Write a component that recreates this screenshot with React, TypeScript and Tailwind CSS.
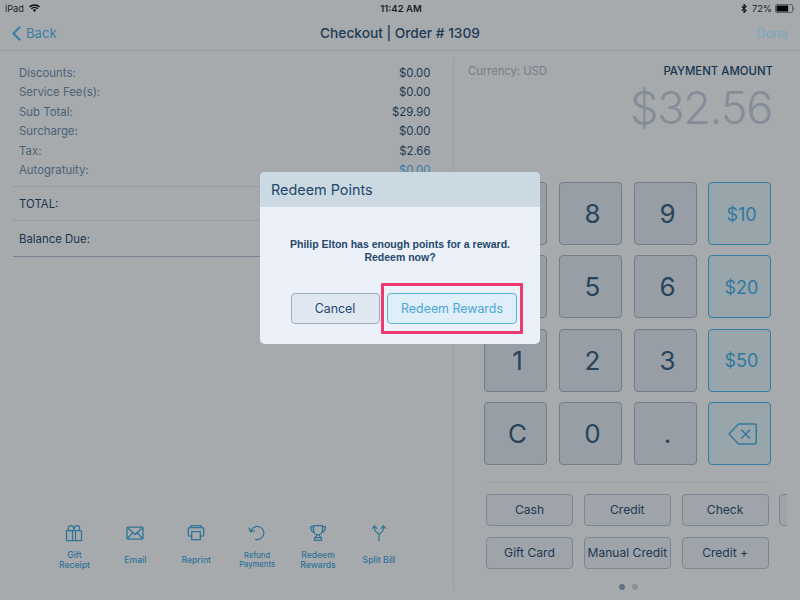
import type { ReactNode } from 'react';

const summaryRows = [
  { label: 'Discounts:', value: '$0.00' },
  { label: 'Service Fee(s):', value: '$0.00' },
  { label: 'Sub Total:', value: '$29.90' },
  { label: 'Surcharge:', value: '$0.00' },
  { label: 'Tax:', value: '$2.66' },
  { label: 'Autogratuity:', value: '$0.00', editable: true },
];

const keypad = [
  '7', '8', '9', '$10',
  '4', '5', '6', '$20',
  '1', '2', '3', '$50',
  'C', '0', '.', 'back',
];

const paymentMethods = ['Cash', 'Credit', 'Check', 'Gift Card', 'Manual Credit', 'Credit +'];

const actions: { lines: string[]; size: string; icon: ReactNode }[] = [
  {
    lines: ['Gift', 'Receipt'],
    size: 'text-[8.6px] leading-[10px]',
    icon: (
      <>
        <path d="M1.5 6.5h15v10h-15zM7.5 6.5v10M10.5 6.5v10" />
        <path d="M9 6.2C8.8 3.200 7.500 1.500 5.700 1.500 3.500 1.500 2.500 4 4 6.300M9 6.200c.2-3 1.500-4.700 3.300-4.700 2.200 0 3.200 2.500 1.700 4.800" />
      </>
    ),
  },
  {
    lines: ['Email'],
    size: 'text-[8.6px] leading-[10px]',
    icon: (
      <>
        <rect x="1" y="3.2" width="16" height="11.8" rx="1" />
        <path d="M1.5 3.8 9 10.5l7.500-6.700M1.500 14.500l5.200-5.700M16.500 14.500l-5.200-5.700" />
      </>
    ),
  },
  {
    lines: ['Reprint'],
    size: 'text-[8.6px] leading-[10px]',
    icon: (
      <>
        <path d="M4.5 12H2.700A1.500 1.500 0 0 1 1.200 10.500V5A1.500 1.500 0 0 1 2.700 3.500h12.600A1.500 1.500 0 0 1 16.800 5v5.500a1.500 1.500 0 0 1-1.500 1.500h-1.800" />
        <path d="M4 3.200V1.700h10v1.500M4.700 7.600h8.600v8.100H4.700z" />
      </>
    ),
  },
  {
    lines: ['Refund', 'Payments'],
    size: 'text-[7.6px] leading-[9px]',
    icon: (
      <>
        <path d="M3 6.800A6.600 6.600 0 1 1 7.500 15.400" />
        <path d="M1.200 4.200l1.200 3.700 3.800-1.200" />
      </>
    ),
  },
  {
    lines: ['Redeem', 'Rewards'],
    size: 'text-[8.6px] leading-[10px]',
    icon: (
      <>
        <path d="M4.500 1.500h9v4.200c0 3-2 5.200-4.500 5.200S4.500 8.700 4.500 5.700z" />
        <path d="M4.500 2.500H1.700c0 3.300 1 5.500 3.800 6M13.500 2.500h2.800c0 3.300-1 5.500-3.800 6M7.800 10.800c0 1.500-.5 1.900-2.300 2.900v2.600h7v-2.600c-1.800-1-2.300-1.400-2.300-2.900M5.500 13.700h7" />
      </>
    ),
  },
  {
    lines: ['Split Bill'],
    size: 'text-[8.6px] leading-[10px]',
    icon: (
      <>
        <path d="M9 16.500V11C9 8.500 4.600 9 4.600 5V2M9 11c0-2.500 4.400-2 4.400-6V2" />
        <path d="M2.300 4.300l2.300-2.500 2.300 2.500M11.100 4.300l2.300-2.500 2.300 2.500" />
      </>
    ),
  },
];

function StatusBar() {
  return (
    <div className="flex h-[17px] items-center justify-between px-[5px] text-[9.5px] text-[#1d2023]">
      <div className="flex w-[120px] items-center gap-[5px]">
        <span className="text-[9.2px]">iPad</span>
        <svg width="11" height="8" viewBox="0 0 11 8" fill="none" stroke="#0b0c0d" strokeWidth="1.5">
          <path d="M.6 2.900a7 7 0 0 1 9.800 0M2.300 4.700a4.600 4.600 0 0 1 6.400 0" />
          <path d="M5.500 7.900 3.700 6a2.600 2.600 0 0 1 3.600 0z" fill="#0b0c0d" stroke="none" />
        </svg>
      </div>
      <div className="pl-[2px] pt-[1px] font-semibold">11:42 AM</div>
      <div className="flex w-[120px] items-center justify-end text-[9.3px]">
        <svg width="6" height="9" viewBox="0 0 6 9" fill="none" stroke="#111314" strokeWidth="1.1" className="mr-[5px]">
          <path d="M.7 2.300l4.400 4.200L3 8.500v-8l2.100 2L.7 6.700" />
        </svg>
        <span>72%</span>
        <svg width="20" height="9" viewBox="0 0 20 9" className="ml-[3px]">
          <rect x=".5" y=".5" width="17" height="8" rx="1.5" fill="none" stroke="#4b5054" strokeWidth=".8" />
          <rect x="1.5" y="1.5" width="11.7" height="6" rx=".5" fill="#050505" />
          <path d="M18.400 3c1.200.3 1.200 2.700 0 3z" fill="#4b5054" />
        </svg>
      </div>
    </div>
  );
}

function NavBar() {
  return (
    <div className="flex h-[34px] items-center justify-between border-b border-[#969ca1] px-3 text-[13.2px]">
      <div className="flex w-[100px] items-center gap-[5px] text-[#377fa5]">
        <svg width="9" height="15" viewBox="0 0 9 15" fill="none" stroke="currentColor" strokeWidth="2.2">
          <path d="M8 .8 1.500 7.500 8 14.200" />
        </svg>
        <span className="text-[13.1px]">Back</span>
      </div>
      <h1 className="text-[13.7px] font-medium text-[#1d3a54]">Checkout | Order # 1309</h1>
      <div className="w-[100px] pt-[1px] text-right text-[12.7px] text-[#7aa6bd]">Done</div>
    </div>
  );
}

function OrderSummary() {
  return (
    <section className="flex w-[453px] flex-col pl-[13px] pr-[10px]">
      <div className="flex h-[135px] flex-col pl-[6px] pr-[12.5px] pt-[12.5px] text-[11.4px]">
        {summaryRows.map((row) => (
          <div key={row.label} className="flex h-[19.5px] shrink-0 items-center justify-between">
            <span className="text-[#4b6275]">{row.label}</span>
            <span className={row.editable ? 'text-[#377fa5]' : 'text-[#1f3a52]'}>{row.value}</span>
          </div>
        ))}
      </div>
      <div className="flex h-[34px] items-center border-t border-[#959ba1] pl-[6px] pt-[2px] text-[11.4px] text-[#19344d]">TOTAL:</div>
      <div className="flex h-[37px] items-center border-b border-t border-b-[#778290] border-t-[#959ba1] pl-[6px] pt-[2px] text-[11.4px] text-[#19344d]">
        Balance Due:
      </div>
      <div className="mb-[29px] ml-[31px] mt-auto flex">
        {actions.map((action) => (
          <div key={action.lines.join(' ')} className="flex w-[60.9px] flex-col items-center text-[#2f7398]">
            <svg width="18" height="18" viewBox="0 0 18 18" fill="none" stroke="currentColor" strokeWidth="1.25" strokeLinejoin="round" strokeLinecap="round">
              {action.icon}
            </svg>
            <div className={`mt-[7px] flex h-[22px] flex-col justify-center text-center font-medium ${action.size}`}>
              {action.lines.map((line) => (
                <span key={line}>{line}</span>
              ))}
            </div>
          </div>
        ))}
      </div>
    </section>
  );
}

function Key({ label }: { label: string }) {
  if (label === 'back' || label.startsWith('$')) {
    return (
      <button className="flex items-center justify-center rounded-[4px] border border-[#327da4] bg-[#98a5aa] pl-[4px] pt-[1px] text-[18px] text-[#3279a0]">
        {label === 'back' ? (
          <svg width="30" height="22" viewBox="0 0 30 22" fill="none" stroke="currentColor" strokeWidth="1.5" strokeLinejoin="round" className="ml-[2px]">
            <path d="M10.500 1h15.700a2 2 0 0 1 2 2v16a2 2 0 0 1-2 2H10.500L1 11z" />
            <path d="M13.300 6.800l8.700 8.700M22 6.800l-8.700 8.700" />
          </svg>
        ) : (
          label
        )}
      </button>
    );
  }
  return (
    <button className="flex items-center justify-center rounded-[4px] border border-[#717d89] bg-[#979ea5] pl-[4px] text-[26px] text-[#29435a]">
      {label}
    </button>
  );
}

function PaymentPanel() {
  return (
    <section className="flex flex-1 flex-col">
      <div className="flex h-[131px] justify-between pl-[14px] pr-[27px] pt-[12px]">
        <span className="text-[11.2px] leading-[16px] text-[#737f8a]">Currency: USD</span>
        <div className="flex flex-col items-end">
          <span className="text-[11.4px] font-medium leading-[16px] text-[#17344f]">PAYMENT AMOUNT</span>
          <span className="mr-[1px] mt-[1px] text-[45px] font-light leading-[56px] tracking-[-1.2px] text-[#858d98]">$32.56</span>
        </div>
      </div>
      <div className="ml-[30px] grid h-[283px] w-[287px] grid-cols-[75px_75px_74px_63px] grid-rows-[repeat(4,63px)] content-between *:w-[63px]">
        {keypad.map((label) => (
          <Key key={label} label={label} />
        ))}
      </div>
      <div className="ml-[31px] mr-[29px] mt-[17px] border-t border-[#989fa5]" />
      <div className="ml-[32px] mt-[11px] flex w-[301px] gap-[10.5px] overflow-hidden">
        <div className="grid shrink-0 grid-cols-[repeat(3,87px)] grid-rows-[repeat(2,32px)] gap-x-[10.8px] gap-y-[11px]">
          {paymentMethods.map((method) => (
            <button key={method} className="flex items-center justify-center whitespace-nowrap rounded-[4px] border border-[#7b8793] bg-[#9ea4a9] text-[12.1px] text-[#1d3850]">
              {method}
            </button>
          ))}
        </div>
        <div className="h-[32px] w-[87px] shrink-0 rounded-[4px] border border-[#7b8793] bg-[#9ea4a9]" />
      </div>
      <div className="mt-[15px] flex justify-center gap-[7px] pl-[3px]">
        <span className="size-[6px] rounded-full bg-[#607487]" />
        <span className="size-[6px] rounded-full bg-[#8b9094]" />
      </div>
    </section>
  );
}

function RedeemDialog() {
  return (
    <div className="absolute left-[260px] top-[172px] flex h-[172px] w-[280px] flex-col overflow-hidden rounded-[5px] bg-[#ecf1f9] text-[#24476b]">
      <div className="flex h-[35px] items-center bg-[#cbdae2] pl-[11px] text-[14.4px]">Redeem Points</div>
      <p className="mt-[31px] text-center font-['Liberation_Sans',sans-serif] text-[10.5px] font-bold leading-[13px]">
        Philip Elton has enough points for a reward.
        <br />
        Redeem now?
      </p>
      <div className="ml-[31px] mt-[19px] flex items-center gap-[1px] text-[12.4px]">
        <button className="h-[31px] w-[89px] rounded-[4px] border border-[#9eadbe] bg-[#dfe7f1] pr-[1px] pt-[1px]">Cancel</button>
        <div className="flex h-[51px] w-[142px] items-center justify-center rounded-[1px] border-[3px] border-[#ee396e]">
          <button className="h-[31px] w-[130px] rounded-[4px] border border-[#55b4d6] bg-[#dfeef8] pt-[1px] text-[#4aa6d7]">Redeem Rewards</button>
        </div>
      </div>
    </div>
  );
}

export default function App() {
  return (
    <div className="relative flex h-[600px] w-[800px] flex-col overflow-hidden bg-[#a6aaad] font-['Inter',sans-serif]">
      <StatusBar />
      <NavBar />
      <main className="flex flex-1">
        <OrderSummary />
        <div className="mb-[9px] mt-[7px] w-px bg-[#9ba0a5]" />
        <PaymentPanel />
      </main>
      <RedeemDialog />
    </div>
  );
}
